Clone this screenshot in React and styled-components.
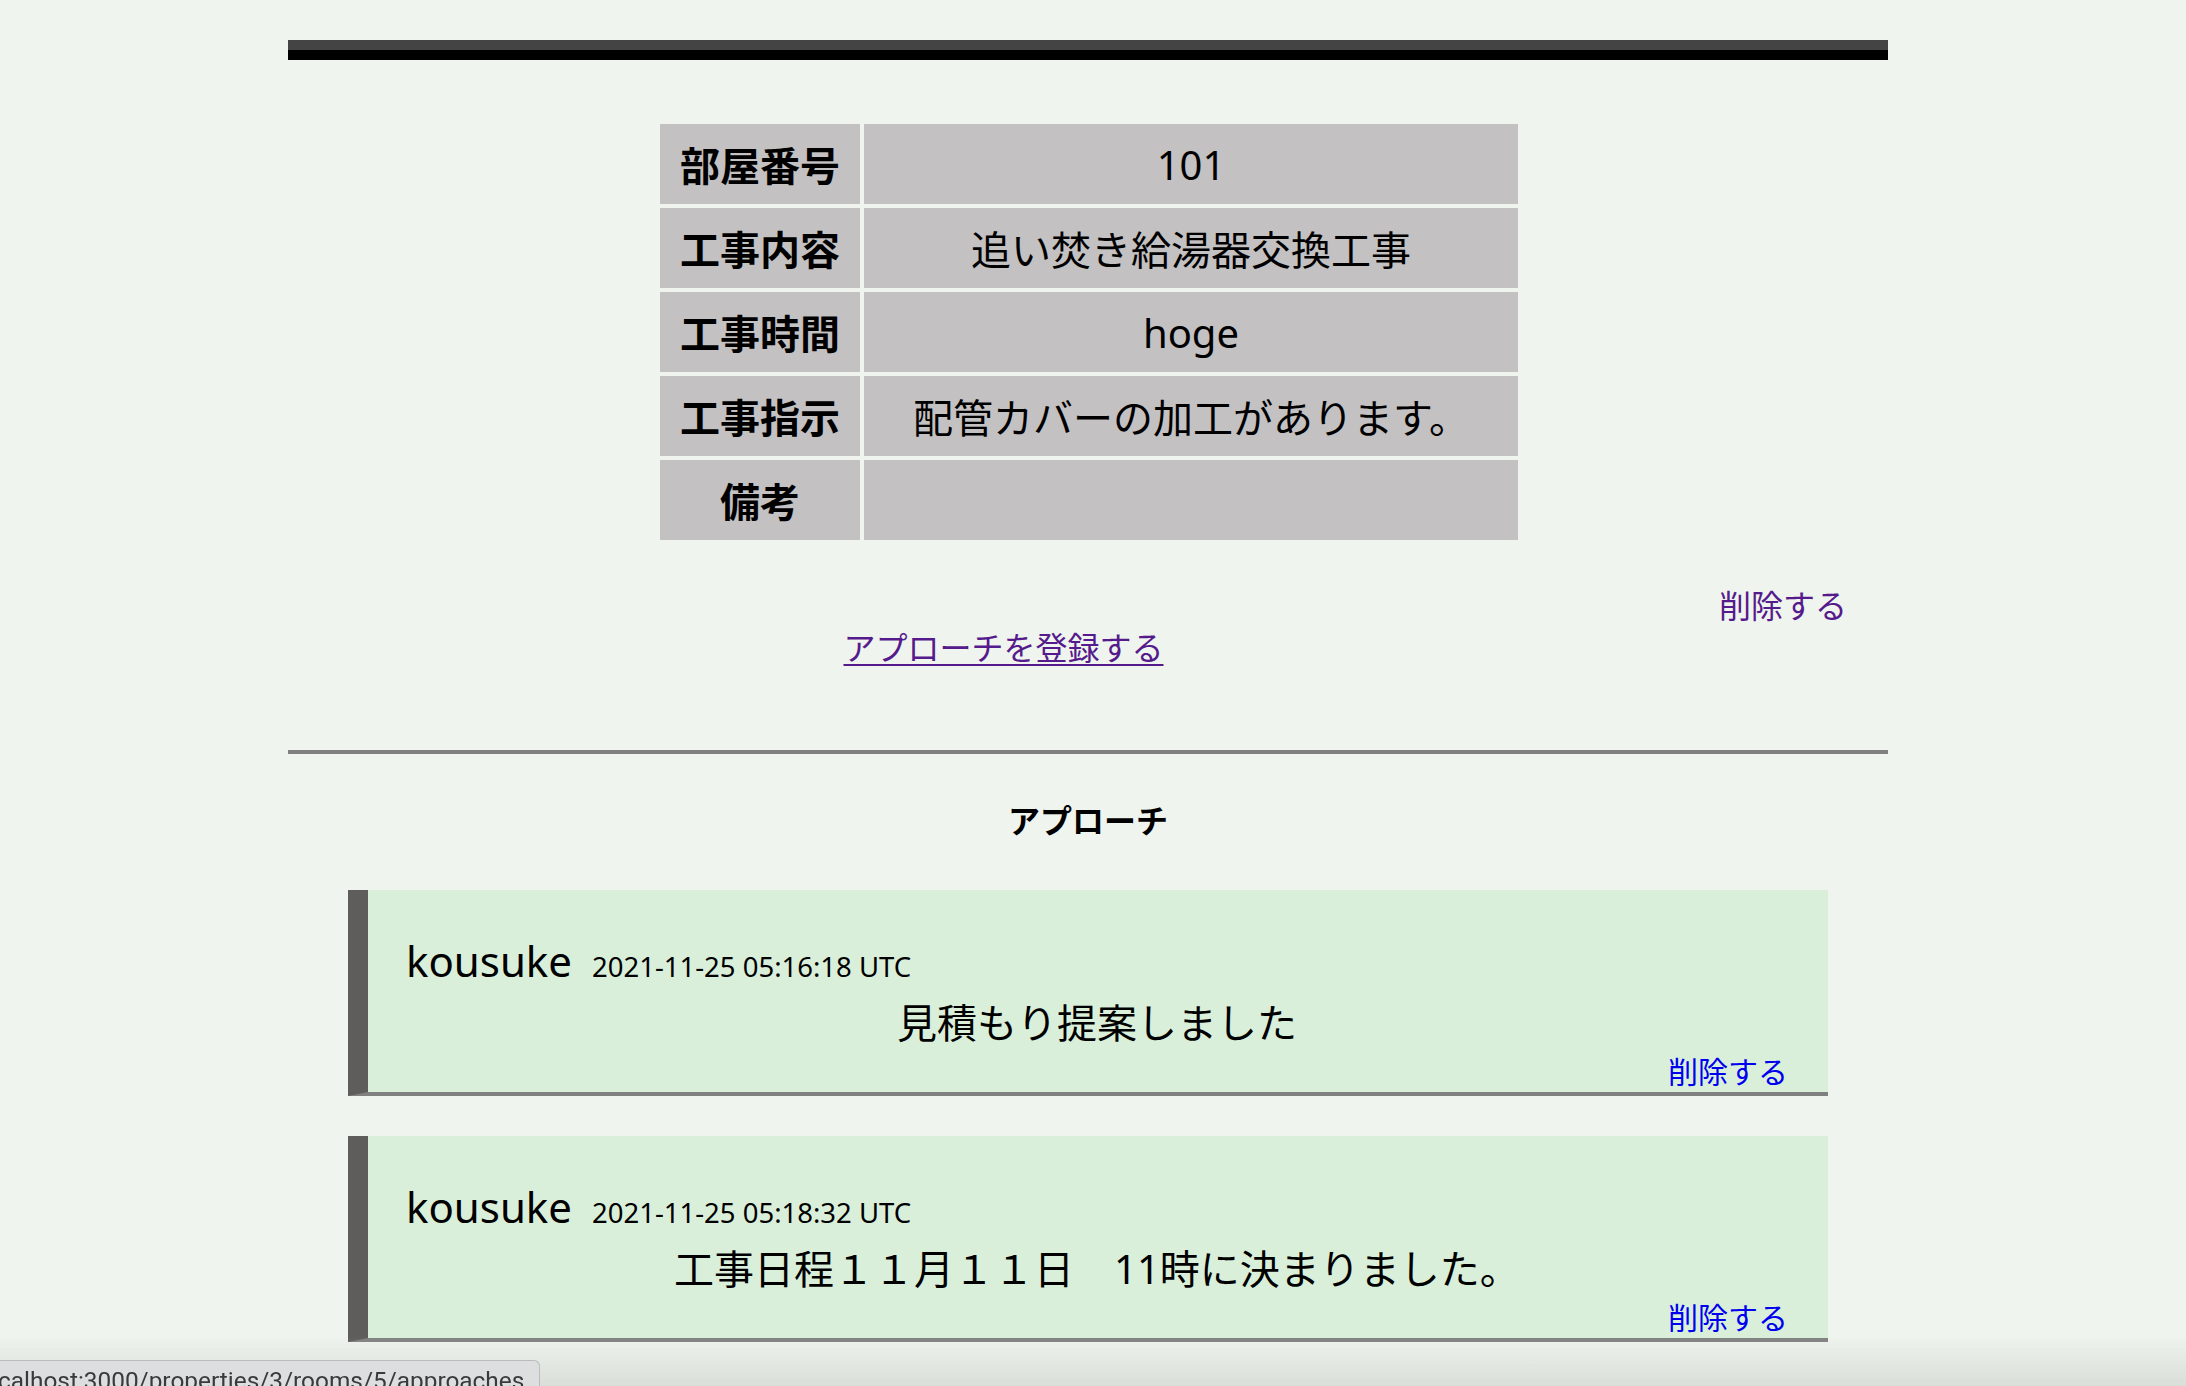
import React from "react";
import styled, { createGlobalStyle } from "styled-components";

const Global = createGlobalStyle`
  html, body { margin: 0; padding: 0; background: #eff4ee; overflow: hidden; }
  body { font-family: "Noto Sans", "Noto Sans CJK JP", sans-serif; color: #000; }
`;

const Page = styled.div`
  padding: 40px 0 0 288px;
  min-height: 1346px;
  box-sizing: border-box;
`;

const Container = styled.div`
  width: 1600px;
`;

const TopRule = styled.div`
  height: 0;
  border-top: 10px solid #444444;
  border-bottom: 10px solid #000000;
`;

const InfoTable = styled.div`
  display: grid;
  grid-template-columns: 200px 654px;
  grid-auto-rows: 80px;
  gap: 4px;
  width: 858px;
  margin: 64px 0 0 372px;
`;

const Label = styled.div`
  background: #c3c1c2;
  display: flex;
  align-items: center;
  justify-content: center;
  font-family: "Noto Sans CJK JP", sans-serif;
  font-weight: 700;
  font-size: 40px;
`;

const Value = styled.div`
  background: #c3c1c2;
  display: flex;
  align-items: center;
  justify-content: center;
  font-size: 40px;
`;

const ActionRow = styled.div`
  display: flex;
  margin-top: 42px;
`;

const ActionMain = styled.div`
  flex: 1;
  text-align: center;
  padding-top: 42px;
  line-height: 48px;
`;

const ActionSide = styled.div`
  padding-right: 41px;
  line-height: 48px;
`;

const Link = styled.a`
  font-size: ${(p) => p.$size || 32}px;
  color: ${(p) => (p.$visited ? "#551a8b" : "#0000ee")};
  text-decoration: ${(p) => (p.$underline ? "underline" : "none")};
  text-underline-offset: 4px;
  text-decoration-thickness: 2px;
  cursor: pointer;
`;

const Divider = styled.div`
  border-top: 4px solid #808080;
  margin-top: 72px;
`;

const SectionTitle = styled.h3`
  margin: 41px 0 0;
  font-family: "Noto Sans CJK JP", sans-serif;
  font-size: 32px;
  font-weight: 700;
  line-height: 48px;
  text-align: center;
`;

const CardList = styled.div`
  display: flex;
  flex-direction: column;
  gap: 40px;
  margin: 47px 60px 0;
`;

const Card = styled.div`
  background: #d9efda;
  border-left: 20px solid #5e5d5b;
  border-bottom: 4px solid #808080;
  padding: 41px 40px 0 38px;
  height: 206px;
  box-sizing: border-box;
  display: flex;
  flex-direction: column;
`;

const CardHeader = styled.div`
  line-height: 60px;
  display: flex;
  align-items: baseline;
  gap: 20px;
`;

const Author = styled.span`
  font-size: 42px;
`;

const Stamp = styled.span`
  font-size: 27.5px;
`;

const Message = styled.div`
  font-size: 40px;
  line-height: 56px;
  text-align: center;
  margin-top: -2px;
`;

const CardFooter = styled.div`
  margin-top: auto;
  text-align: right;
  line-height: 40px;
  margin-bottom: -5px;
`;

const StatusBubble = styled.div`
  position: fixed;
  left: 0;
  bottom: 0;
  width: 540px;
  height: 26px;
  box-sizing: border-box;
  background: #dcdee0;
  border-top: 1px solid #b9bbbc;
  border-right: 1px solid #b9bbbc;
  border-top-right-radius: 6px;
  overflow: hidden;
  white-space: nowrap;
  font-family: "Roboto", "Noto Sans", sans-serif;
  font-size: 24.4px;
  line-height: 40px;
  color: #3a3a3a;
`;

const StatusText = styled.span`
  display: inline-block;
  margin-left: -2px;
  margin-top: -2px;
`;

const BottomFade = styled.div`
  position: fixed;
  left: 0;
  right: 0;
  bottom: 0;
  height: 50px;
  background: linear-gradient(to bottom, rgba(210, 212, 210, 0), rgba(200, 204, 200, 0.55));
  pointer-events: none;
`;

const rows = [
  ["部屋番号", "101"],
  ["工事内容", "追い焚き給湯器交換工事"],
  ["工事時間", "hoge"],
  ["工事指示", "配管カバーの加工があります。"],
  ["備考", ""],
];

const approaches = [
  { author: "kousuke", at: "2021-11-25 05:16:18 UTC", body: "見積もり提案しました" },
  { author: "kousuke", at: "2021-11-25 05:18:32 UTC", body: "工事日程１１月１１日　11時に決まりました。" },
];

export default function App() {
  return (
    <>
      <Global />
      <Page>
        <Container>
          <TopRule />
          <InfoTable>
            {rows.map(([k, v]) => (
              <React.Fragment key={k}>
                <Label>{k}</Label>
                <Value>{v}</Value>
              </React.Fragment>
            ))}
          </InfoTable>
          <ActionRow>
            <ActionMain>
              <Link $visited $underline>アプローチを登録する</Link>
            </ActionMain>
            <ActionSide>
              <Link $visited>削除する</Link>
            </ActionSide>
          </ActionRow>
          <Divider />
          <SectionTitle>アプローチ</SectionTitle>
          <CardList>
            {approaches.map((a) => (
              <Card key={a.at}>
                <CardHeader>
                  <Author>{a.author}</Author>
                  <Stamp>{a.at}</Stamp>
                </CardHeader>
                <Message>{a.body}</Message>
                <CardFooter>
                  <Link $size={30}>削除する</Link>
                </CardFooter>
              </Card>
            ))}
          </CardList>
        </Container>
      </Page>
      <BottomFade />
      <StatusBubble>
        <StatusText>calhost:3000/properties/3/rooms/5/approaches</StatusText>
      </StatusBubble>
    </>
  );
}
